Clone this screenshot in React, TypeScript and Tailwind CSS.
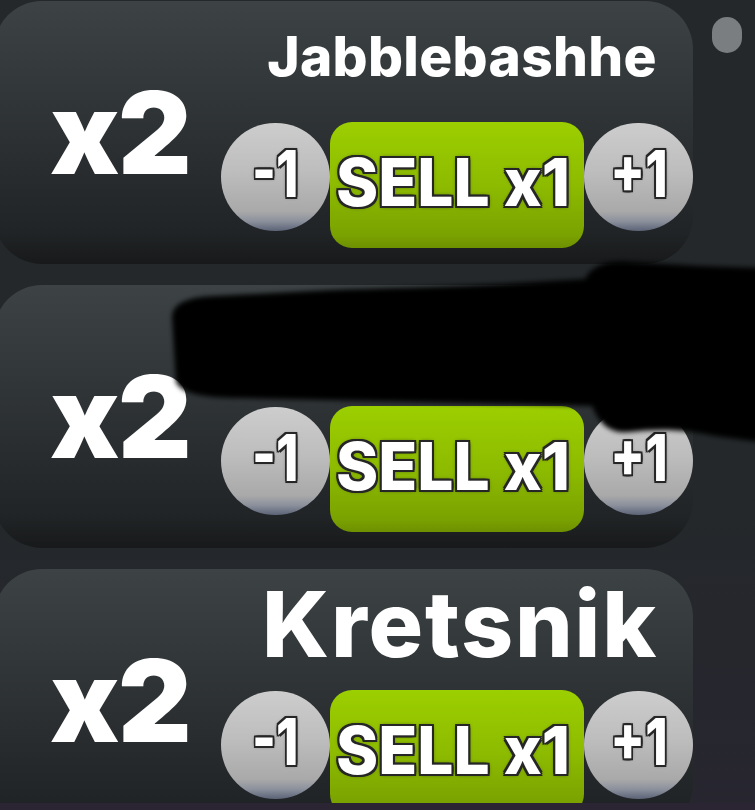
import React from "react";

type Item = {
  count: number;
  name: string | null;
  nameSize: string;
};

const items: Item[] = [
  { count: 2, name: "Jabblebashhe", nameSize: "text-[55px] tracking-[0.3px] ml-[10px]" },
  { count: 2, name: null, nameSize: "text-[55px]" },
  { count: 2, name: "Kretsnik", nameSize: "text-[91px] tracking-[1.8px] ml-[6px]" },
];

const outline =
  "[text-shadow:2px_2px_0_#262626,-2px_-2px_0_#262626,2px_-2px_0_#262626,-2px_2px_0_#262626,0_2px_0_#262626,0_-2px_0_#262626,2px_0_0_#262626,-2px_0_0_#262626,0_0_4px_#1a1a1a]";

function StepButton({ label }: { label: string }) {
  return (
    <button className="mt-[1px] flex h-[108px] w-[109px] shrink-0 items-center justify-center rounded-full bg-[linear-gradient(180deg,#cdcdcd_0%,#bdbdbd_45%,#a9a9a9_82%,#8b909c_91%,#5b6376_100%)]">
      <span
        className={`-mt-[6px] scale-x-[0.82] scale-y-[1.04] text-[62px] leading-none font-extrabold text-white ${outline}`}
      >
        {label}
      </span>
    </button>
  );
}

function SellButton() {
  return (
    <button className="flex h-[126px] w-[254px] shrink-0 items-center justify-center rounded-[22px] bg-[linear-gradient(180deg,#9ccf00_0%,#8dbb00_50%,#7aa200_90%,#6d9000_100%)]">
      <span
        className={`-mt-[7px] -ml-[8px] scale-y-[1.03] text-[64px] leading-none font-extrabold whitespace-nowrap text-white ${outline}`}
      >
        SELL x1
      </span>
    </button>
  );
}

function ItemCard({ item }: { item: Item }) {
  return (
    <div className="flex h-[263px] w-[699px] shrink-0 items-center rounded-[48px] bg-[linear-gradient(180deg,#3d4345_0%,#33383a_30%,#292d2f_62%,#212426_88%,#17191a_100%)] pl-[56px]">
      <div className="w-[175px] text-[114px] leading-none font-black tracking-[-1.5px] text-white">
        x{item.count}
      </div>
      <div className="flex h-full w-[474px] flex-col">
        <div className="mt-[5px] flex h-[100px] items-center justify-center">
          {item.name && (
            <span
              className={`leading-none font-extrabold whitespace-nowrap text-white ${item.nameSize}`}
            >
              {item.name}
            </span>
          )}
        </div>
        <div className="mt-[16px] flex items-start">
          <StepButton label="-1" />
          <SellButton />
          <StepButton label="+1" />
        </div>
      </div>
    </div>
  );
}

export default function App() {
  return (
    <div className="relative h-[810px] w-[755px] overflow-hidden bg-[linear-gradient(180deg,#24282a_0%,#24282a_60%,#272630_100%)] font-['Inter',_'Liberation_Sans',_sans-serif]">
      <div className="flex h-[803px] overflow-hidden">
        <div className="-ml-[6px] flex w-[705px] shrink-0 flex-col gap-[21px] pt-[1px]">
          {items.map((item, i) => (
            <ItemCard key={i} item={item} />
          ))}
        </div>
        <div className="flex-1 pl-[13px] pt-[17px]">
          <div className="h-[36px] w-[30px] rounded-full bg-[#7b7e80]" />
        </div>
      </div>
      <div className="h-[7px] bg-[#2b2533]" />

      {/* marker scribble drawn across the second row */}
      <svg
        className="pointer-events-none absolute top-0 left-0"
        width="755"
        height="810"
        viewBox="0 0 755 810"
      >
        <defs>
          <filter id="soft" x="-10%" y="-10%" width="120%" height="120%">
            <feGaussianBlur stdDeviation="2.5" />
          </filter>
        </defs>
        <path
          filter="url(#soft)"
          fill="#000"
          d="M172 318 C172 302 190 297 215 296 L330 290 C380 288 440 287 500 284 L585 279 C592 266 606 260 630 262 L700 266 L760 268 L760 442 L715 436 C690 430 660 428 630 432 C612 434 600 426 592 406 L520 404 L420 402 L330 400 L240 398 C205 398 182 394 176 382 Z"
        />
      </svg>
    </div>
  );
}
